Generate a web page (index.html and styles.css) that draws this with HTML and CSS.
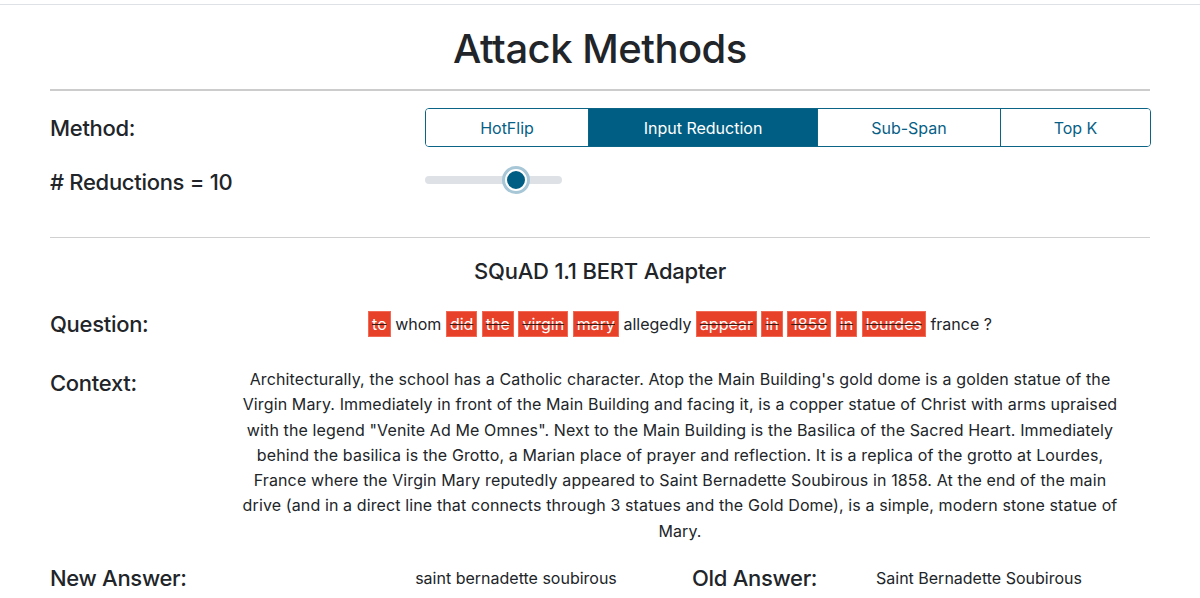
FILE: index.html
```html
<!DOCTYPE html>
<html lang="en">
<head>
  <meta charset="UTF-8" />
  <meta name="viewport" content="width=device-width, initial-scale=1.0" />
  <title>Attack Methods</title>
  <link rel="stylesheet" href="styles.css">
</head>
<body>
  <div class="page">
    <h1>Attack Methods</h1>
    <hr class="title-rule">

    <div class="controls">
      <div class="label">Method:</div>
      <div class="btn-group">
        <button class="btn btn-hotflip">HotFlip</button>
        <button class="btn btn-reduction active">Input Reduction</button>
        <button class="btn btn-subspan">Sub-Span</button>
        <button class="btn btn-topk">Top K</button>
      </div>
      <div class="label reductions">#&nbsp;Reductions = 10</div>
      <div class="slider">
        <div class="track"></div>
        <div class="thumb"></div>
      </div>
    </div>

    <hr>

    <h2>SQuAD 1.1 BERT Adapter</h2>

    <div class="row question-row">
      <div class="label">Question:</div>
      <div class="question">
        <span class="tok">to</span> whom <span class="tok">did</span> <span class="tok">the</span> <span class="tok">virgin</span> <span class="tok">mary</span> allegedly <span class="tok">appear</span> <span class="tok">in</span> <span class="tok">1858</span> <span class="tok">in</span> <span class="tok">lourdes</span> france ?
      </div>
    </div>

    <div class="row context-row">
      <div class="label">Context:</div>
      <p class="context">Architecturally, the school has a Catholic character. Atop the Main Building's gold dome is a golden statue of the Virgin Mary. Immediately in front of the Main Building and facing it, is a copper statue of Christ with arms upraised with the legend "Venite Ad Me Omnes". Next to the Main Building is the Basilica of the Sacred Heart. Immediately behind the basilica is the Grotto, a Marian place of prayer and reflection. It is a replica of the grotto at Lourdes, France where the Virgin Mary reputedly appeared to Saint Bernadette Soubirous in 1858. At the end of the main drive (and in a direct line that connects through 3 statues and the Gold Dome), is a simple, modern stone statue of Mary.</p>
    </div>

    <div class="answers">
      <div class="label">New Answer:</div>
      <div class="answer new">saint bernadette soubirous</div>
      <div class="label">Old Answer:</div>
      <div class="answer">Saint Bernadette Soubirous</div>
    </div>
  </div>
</body>
</html>
```

FILE: styles.css
```css
body { margin: 4px 0 0; font-family: Inter, "Noto Sans", sans-serif; color: #212529; background: #fff; border-top: 1px solid #dee2e6; }
.page { width: 1100px; margin: 0 auto; }
h1 { margin: 0; padding-top: 20px; font-size: 40px; font-weight: 500; text-align: center; line-height: 48px; letter-spacing: -0.5px; }
hr { border: 0; border-top: 1px solid #d0d0d0; margin: 0; }
hr.title-rule { margin-top: 16px; border-top: 2px solid #ccc; }
.label { font-size: 22px; font-weight: 500; letter-spacing: -0.3px; }
.controls { display: grid; grid-template-columns: 375px 726px; align-items: center; row-gap: 18px; padding: 17px 0 42px; }
.reductions { padding-top: 4px; }
.btn-group { display: flex; border: 1px solid #0b6385; border-radius: 4px; overflow: hidden; height: 39px; box-sizing: border-box; }
.btn { font: inherit; font-size: 16px; color: #075f86; background: #fff; border: 0; border-left: 1px solid #0b6385; padding: 0; }
.btn:first-child { border-left: 0; }
.btn-hotflip { width: 162px; }
.btn-reduction { width: 229px; }
.btn-subspan { width: 183px; }
.btn-topk { flex: 1; }
.btn.active { background: #005e84; color: #fff; }
.slider { position: relative; width: 137px; height: 24px; }
.track { position: absolute; left: 0; right: 0; top: 8px; height: 8px; background: #dee2e6; border-radius: 4px; }
.thumb { position: absolute; left: 80px; top: 1px; width: 18px; height: 18px; border-radius: 50%; background: #005e84; border: 2px solid #fff; box-shadow: 0 0 0 3px #a7c6d6; }
h2 { margin: 0; padding-top: 19px; font-size: 22px; font-weight: 500; text-align: center; line-height: 28px; letter-spacing: -0.2px; }
.row { display: grid; grid-template-columns: 190px 880px; }
.question-row { align-items: center; padding-top: 26px; }
.question { text-align: center; font-size: 16px; line-height: 26px; }
.tok { display: inline-block; background: #e8412a; color: #fff; text-decoration: line-through; text-decoration-color: #3a1a14; border: 1px solid #f06a55; padding: 0 3px; line-height: 24px; }
.context-row { padding-top: 30px; }
.context-row .label { padding-top: 3px; }
.context { margin: 0; text-align: center; font-size: 16px; line-height: 25.3px; letter-spacing: 0.12px; }
.answers { display: grid; grid-template-columns: 290px 352px 184px 270px; align-items: center; padding-top: 21px; }
.answer { font-size: 16px; }
.answer.new { text-align: center; }
```
